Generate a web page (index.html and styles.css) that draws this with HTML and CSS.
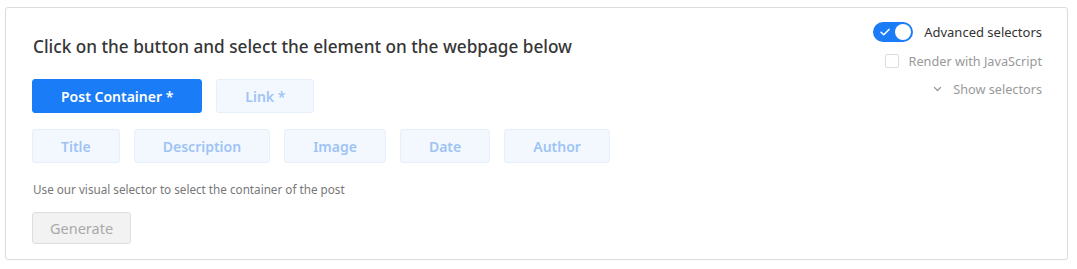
FILE: index.html
```html
<!DOCTYPE html>
<html>
<head>
<meta charset="utf-8">
<link rel="stylesheet" href="styles.css">
</head>
<body>
<div class="card">
  <div class="main">
    <h2 class="title">Click on the button and select the element on the webpage below</h2>
    <div class="row row-first">
      <button class="btn btn-primary">Post Container *</button>
      <button class="btn btn-light">Link *</button>
    </div>
    <div class="row">
      <button class="btn btn-light">Title</button>
      <button class="btn btn-light">Description</button>
      <button class="btn btn-light">Image</button>
      <button class="btn btn-light">Date</button>
      <button class="btn btn-light">Author</button>
    </div>
    <p class="hint">Use our visual selector to select the container of the post</p>
    <button class="btn-generate">Generate</button>
  </div>
  <div class="side">
    <div class="opt opt-toggle">
      <span class="toggle">
        <svg class="check" width="10" height="8" viewBox="0 0 10 8"><path d="M1 4.2 L3.8 6.8 L9 1.4" fill="none" stroke="#fff" stroke-width="1.5" stroke-linecap="round" stroke-linejoin="round"/></svg>
        <span class="knob"></span>
      </span>
      <span class="opt-label">Advanced selectors</span>
    </div>
    <div class="opt opt-check">
      <span class="box"></span>
      <span class="muted">Render with JavaScript</span>
    </div>
    <div class="opt opt-show">
      <svg class="chev" width="9" height="6" viewBox="0 0 9 6"><path d="M1.5 1.5 L4.5 4.5 L7.5 1.5" fill="none" stroke="#999" stroke-width="1.2" stroke-linecap="round" stroke-linejoin="round"/></svg>
      <span class="muted">Show selectors</span>
    </div>
  </div>
</div>
</body>
</html>
```

FILE: styles.css
```css
* { box-sizing: border-box; }
html, body { margin: 0; padding: 0; background: #fff; }
body {
  font-family: "Noto Sans", "Open Sans", sans-serif;
  padding: 7px 9px 0 5px;
}
.card {
  display: flex;
  justify-content: space-between;
  border: 1px solid #dcdcdc;
  border-radius: 3px;
  padding: 13px 25px 15px 26px;
  height: 253px;
}
.main { display: flex; flex-direction: column; align-items: flex-start; }
.title {
  margin: 15px 0 0 1px;
  font-size: 17.2px;
  line-height: 22px;
  font-weight: 500;
  color: #363636;
}
.row { display: flex; gap: 14px; margin-top: 16px; }
.row-first { margin-top: 21px; }
.btn {
  height: 34px;
  padding: 0 28px;
  font-family: inherit;
  font-size: 14px;
  font-weight: 600;
  border-radius: 3px;
  border: 1px solid transparent;
}
.btn-primary { background: #1a7cf7; color: #fff; border-color: #1a7cf7; }
.btn-light { background: #f3f8ff; color: #9fc4f4; border-color: #e7effa; }
.hint {
  margin: 18px 0 0 1px;
  font-size: 11.7px;
  line-height: 16px;
  color: #777;
}
.btn-generate {
  margin-top: 15px;
  height: 33px;
  padding: 0 17px;
  font-family: inherit;
  font-size: 14.5px;
  color: #aaa;
  background: #f2f2f2;
  border: 1px solid #dedede;
  border-radius: 3px;
}
.side { display: flex; flex-direction: column; align-items: flex-end; }
.opt { display: flex; align-items: center; font-size: 13px; line-height: 18px; }
.opt-toggle { height: 22px; }
.opt-check { margin-top: 8px; height: 20px; }
.opt-show { margin-top: 8px; height: 20px; }
.toggle {
  position: relative;
  width: 40px;
  height: 20px;
  border-radius: 10px;
  background: #1a7cf7;
  margin-right: 11px;
}
.check { position: absolute; left: 7px; top: 6px; }
.knob {
  position: absolute;
  right: 2px;
  top: 2px;
  width: 16px;
  height: 16px;
  border-radius: 50%;
  background: #fff;
}
.opt-label { color: #333; }
.box {
  width: 14px;
  height: 14px;
  border: 1px solid #ddd;
  border-radius: 2px;
  margin-right: 10px;
}
.muted { color: #999; font-size: 12.7px; }
.chev { margin-right: 11px; }
```
